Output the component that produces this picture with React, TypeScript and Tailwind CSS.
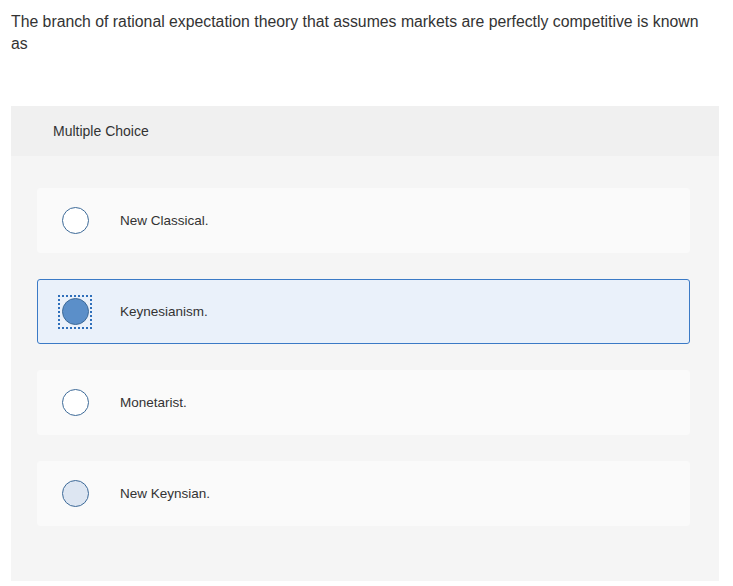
import React from 'react';

interface Choice {
    label: string;
    state: 'idle' | 'selected' | 'hover';
}

const choices: Choice[] = [
    { label: 'New Classical.', state: 'idle' },
    { label: 'Keynesianism.', state: 'selected' },
    { label: 'Monetarist.', state: 'idle' },
    { label: 'New Keynsian.', state: 'hover' },
];

const Radio: React.FC<{ state: Choice['state'] }> = ({ state }) => {
    const fill =
        state === 'selected' ? 'bg-[#5b8fc9]' : state === 'hover' ? 'bg-[#dde6f2]' : 'bg-white';
    return (
        <div
            className={`w-[34px] h-[34px] flex items-center justify-center ${
                state === 'selected' ? 'border-2 border-dotted border-[#2f6fba]' : ''
            }`}
        >
            <div className={`w-[27px] h-[27px] rounded-full border-[1.5px] border-[#3d6a98] ${fill}`} />
        </div>
    );
};

export default function App() {
    return (
        <div className="w-[733px] h-[586px] bg-white font-['Liberation_Sans',sans-serif] text-[#333]">
            <p className="pl-[11px] pr-[14px] pt-[11px] text-[15.8px] leading-[22px]">
                The branch of rational expectation theory that assumes markets are perfectly competitive is known
                as
            </p>

            <div className="mt-[51px] mx-[11px] w-[708px] h-[475px] bg-[#f5f5f5]">
                <div className="h-[50px] bg-[#f0f0f0] pl-[42px] flex items-center text-[14px]">
                    Multiple Choice
                </div>
                <div className="pt-[32px] pl-[26px] pr-[29px] flex flex-col gap-[26px]">
                    {choices.map((c) => (
                        <div
                            key={c.label}
                            className={`h-[65px] rounded-[3px] flex items-center pl-[20px] ${
                                c.state === 'selected'
                                    ? 'bg-[#eaf1fa] border border-[#3b7ac6]'
                                    : 'bg-[#fafafa] border border-[#fafafa]'
                            }`}
                        >
                            <Radio state={c.state} />
                            <span className="ml-[28px] pt-[2px] text-[13.5px]">{c.label}</span>
                        </div>
                    ))}
                </div>
            </div>
        </div>
    );
}
